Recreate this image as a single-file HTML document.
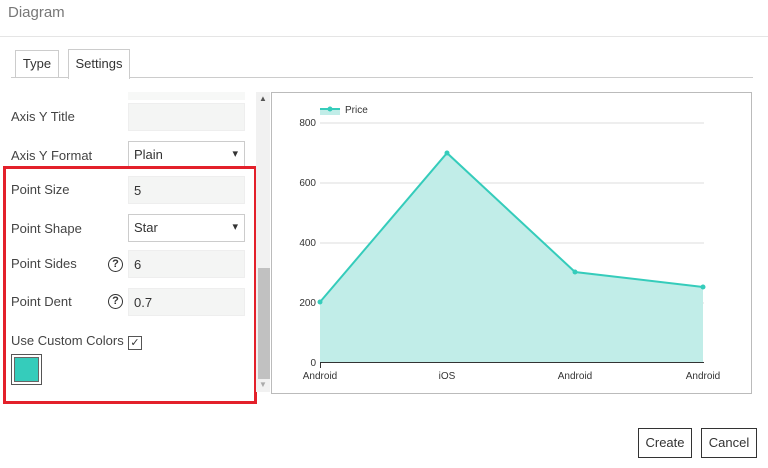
<!DOCTYPE html>
<html><head><meta charset="utf-8"><style>
*{box-sizing:border-box;margin:0;padding:0}
body{width:768px;height:468px;background:#fff;font-family:"Liberation Sans",sans-serif;color:#333;position:relative;overflow:hidden}
.a{position:absolute}
.lbl{position:absolute;left:11px;font-size:13px;color:#444}
.inp{position:absolute;left:128px;width:117px;height:28px;background:#f4f5f4;border:1px solid #eee;font-size:13px;padding:6px 5px;color:#333}
.sel{background:#fff;border:1px solid #ccc;padding:5px}
.sel:after{content:"▾";position:absolute;right:6px;top:5px;font-size:11px}
.q{position:absolute;left:108px;width:15px;height:15px;border:1.5px solid #333;border-radius:50%;font-size:11px;font-weight:bold;text-align:center;line-height:12px}
.btn{position:absolute;top:428px;height:30px;border:1px solid #333;font-size:13px;text-align:center;line-height:28px;background:#fff}
</style></head><body>
<div class="a" style="left:8px;top:4px;font-size:15px;color:#777">Diagram</div>
<div class="a" style="left:0;top:36px;width:768px;height:1px;background:#e5e5e5"></div>
<div class="a" style="left:11px;top:77px;width:742px;height:1px;background:#ccc"></div>
<div class="a" style="left:15px;top:50px;width:44px;height:28px;border:1px solid #ccc;border-bottom:none;font-size:13px;text-align:center;line-height:26px">Type</div>
<div class="a" style="left:68px;top:49px;width:62px;height:30px;border:1px solid #ccc;border-bottom:none;background:#fff;font-size:13px;text-align:center;line-height:28px">Settings</div>

<div class="a" style="left:128px;top:92px;width:117px;height:8px;background:#f7f8f7"></div>
<div class="lbl" style="top:109px">Axis Y Title</div><div class="inp" style="top:103px"></div>
<div class="lbl" style="top:148px">Axis Y Format</div><div class="inp sel" style="top:141px">Plain</div>
<div class="lbl" style="top:182px">Point Size</div><div class="inp" style="top:176px">5</div>
<div class="lbl" style="top:221px">Point Shape</div><div class="inp sel" style="top:214px">Star</div>
<div class="lbl" style="top:256px">Point Sides</div><div class="q" style="top:257px">?</div><div class="inp" style="top:250px">6</div>
<div class="lbl" style="top:294px">Point Dent</div><div class="q" style="top:294px">?</div><div class="inp" style="top:288px">0.7</div>
<div class="lbl" style="top:333px">Use Custom Colors</div>
<div class="a" style="left:128px;top:336px;width:14px;height:14px;border:1px solid #555;font-size:11px;line-height:12px;text-align:center">✓</div>
<div class="a" style="left:11px;top:354px;width:31px;height:31px;border:1px solid #555;padding:2px"><div style="width:25px;height:25px;background:#35ccbb;border:1px solid #666"></div></div>
<div class="a" style="left:3px;top:166px;width:254px;height:238px;border:3px solid #e3202a"></div>

<div class="a" style="left:256px;top:92px;width:14px;height:300px;background:#f1f1f1"></div>
<div class="a" style="left:258px;top:268px;width:12px;height:111px;background:#c1c1c1"></div>
<div class="a" style="left:259px;top:94px;font-size:8px;color:#555">▲</div>
<div class="a" style="left:259px;top:380px;font-size:8px;color:#aaa">▼</div>

<svg class="a" style="left:271px;top:92px" width="481" height="302">
<rect x="0.5" y="0.5" width="480" height="301" fill="#fff" stroke="#bbb"/>
<g stroke="#ddd"><line x1="49" y1="31" x2="433" y2="31"/><line x1="49" y1="91" x2="433" y2="91"/><line x1="49" y1="151" x2="433" y2="151"/><line x1="49" y1="211" x2="433" y2="211"/></g>
<polygon points="49,210 176,61 304,180 432,195 432,270 49,270" fill="#c1ede8"/>
<polyline points="49,210 176,61 304,180 432,195" fill="none" stroke="#35ccbb" stroke-width="2"/>
<g fill="#35ccbb"><circle cx="49" cy="210" r="2.5"/><circle cx="176" cy="61" r="2.5"/><circle cx="304" cy="180" r="2.5"/><circle cx="432" cy="195" r="2.5"/></g>
<line x1="49" y1="270.5" x2="433" y2="270.5" stroke="#333"/>
<line x1="49.5" y1="270" x2="49.5" y2="276" stroke="#333"/>
<g font-size="10" fill="#333" font-family="Liberation Sans"><text x="45" y="34" text-anchor="end">800</text><text x="45" y="94" text-anchor="end">600</text><text x="45" y="154" text-anchor="end">400</text><text x="45" y="214" text-anchor="end">200</text><text x="45" y="274" text-anchor="end">0</text>
<text x="49" y="287" text-anchor="middle">Android</text><text x="176" y="287" text-anchor="middle">iOS</text><text x="304" y="287" text-anchor="middle">Android</text><text x="432" y="287" text-anchor="middle">Android</text>
<text x="74" y="21">Price</text></g>
<rect x="49" y="17" width="20" height="6" fill="#c1ede8"/><line x1="49" y1="17" x2="69" y2="17" stroke="#35ccbb" stroke-width="2"/><circle cx="59" cy="17" r="2.5" fill="#35ccbb"/>
</svg>

<div class="btn" style="left:638px;width:54px">Create</div>
<div class="btn" style="left:701px;width:56px">Cancel</div>
</body></html>
